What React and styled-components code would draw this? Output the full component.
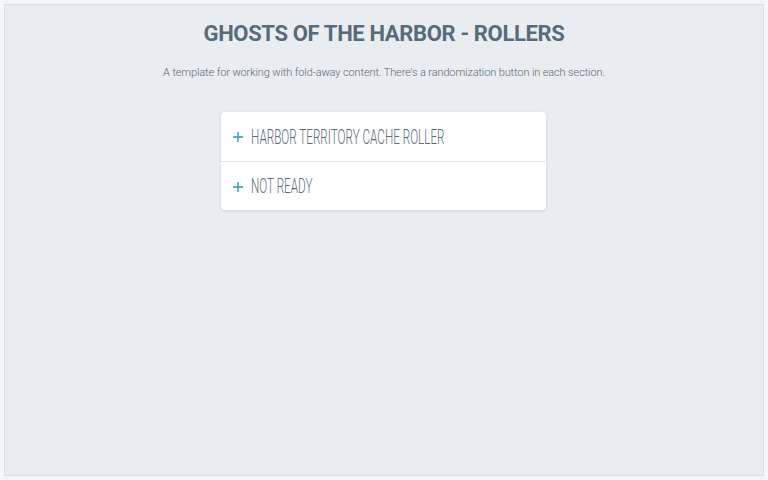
import React from 'react';
import styled, {createGlobalStyle} from 'styled-components';

const GlobalStyle = createGlobalStyle`
  html, body {
    margin: 0;
    background: #f5f5f5;
  }
  body {
    font-family: Roboto, "Liberation Sans", sans-serif;
  }
`
const Page = styled.div`
  margin: 4px;
  height: 470px;
  border: 1px solid #dadfe3;
  background: #e9edf0;
  display: flex;
  flex-direction: column;
  align-items: center;
`
const Title = styled.h1`
  margin: 15px 0 0 0;
  font-size: 22px;
  font-weight: 700;
  letter-spacing: -0.35px;
  color: #566c79;
  line-height: 28px;
`
const Subtitle = styled.p`
  margin: 18px 0 0 0;
  font-size: 11px;
  font-weight: 300;
  letter-spacing: -0.12px;
  color: #5b6a73;
  line-height: 14px;
`
const Accordion = styled.div`
  margin: 32px 1px 0 0;
  width: 325px;
  background: #fff;
  border-radius: 4px;
  box-shadow: 0 1px 3px rgba(0,0,0,0.12);
`
const Row = styled.div`
  height: 49px;
  box-sizing: border-box;
  padding: 1px 0 0 12px;
  display: flex;
  align-items: center;
  gap: 8px;
  overflow: hidden;
  border-top: ${props => props.first ? 'none' : '1px solid #e1e5e8'};
`
const Icon = styled.svg`
  flex-shrink: 0;
`
const Label = styled.span`
  display: inline-block;
  font-size: 19.5px;
  font-weight: 300;
  color: #586b77;
  transform: scaleX(0.6);
  transform-origin: left center;
  white-space: nowrap;
`

function PlusIcon() {
  return (
    <Icon width="10" height="10" viewBox="0 0 10 10">
      <path d="M5 0v10M0 5h10" stroke="#24a0b6" strokeWidth="1.4" fill="none"/>
    </Icon>
  )
}

function App() {
  return (
    <>
      <GlobalStyle/>
      <Page>
        <Title>GHOSTS OF THE HARBOR - ROLLERS</Title>
        <Subtitle>A template for working with fold-away content. There's a randomization button in each section.</Subtitle>
        <Accordion>
          <Row first><PlusIcon/><Label>HARBOR TERRITORY CACHE ROLLER</Label></Row>
          <Row><PlusIcon/><Label>NOT READY</Label></Row>
        </Accordion>
      </Page>
    </>
  )
}

export default App;
